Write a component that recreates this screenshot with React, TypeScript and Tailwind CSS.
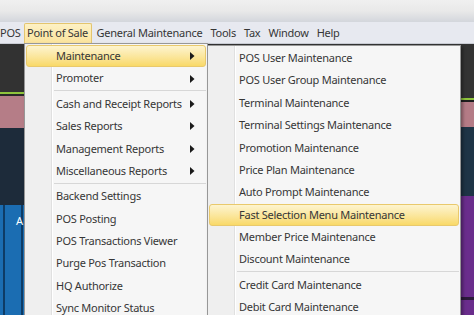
import type { ReactNode } from 'react';

type Item = { label: string; sub?: boolean; active?: boolean } | 'sep';

const mainItems: Item[] = [
  { label: 'Maintenance', sub: true, active: true },
  { label: 'Promoter', sub: true },
  'sep',
  { label: 'Cash and Receipt Reports', sub: true },
  { label: 'Sales Reports', sub: true },
  { label: 'Management Reports', sub: true },
  { label: 'Miscellaneous Reports', sub: true },
  'sep',
  { label: 'Backend Settings' },
  { label: 'POS Posting' },
  { label: 'POS Transactions Viewer' },
  { label: 'Purge Pos Transaction' },
  { label: 'HQ Authorize' },
  { label: 'Sync Monitor Status' },
];

const subItems: Item[] = [
  { label: 'POS User Maintenance' },
  { label: 'POS User Group Maintenance' },
  { label: 'Terminal Maintenance' },
  { label: 'Terminal Settings Maintenance' },
  { label: 'Promotion Maintenance' },
  { label: 'Price Plan Maintenance' },
  { label: 'Auto Prompt Maintenance' },
  { label: 'Fast Selection Menu Maintenance', active: true },
  { label: 'Member Price Maintenance' },
  { label: 'Discount Maintenance' },
  'sep',
  { label: 'Credit Card Maintenance' },
  { label: 'Debit Card Maintenance' },
];

const Arrow = () => (
  <svg width="5" height="8" viewBox="0 0 5 8" className="shrink-0">
    <path d="M0 0 L4.5 4 L0 8 Z" fill="#1a1a1a" />
  </svg>
);

const MenuList = ({ items, gutter }: { items: Item[]; gutter: number }) => (
  <div className="flex flex-col">
    {items.map((it, i) =>
      it === 'sep' ? (
        <div key={i} className="flex h-[3px] items-center" style={{ paddingLeft: gutter + 2 }}>
          <div className="h-[2px] w-full border-t border-[#d7d7d7] border-b-white" />
        </div>
      ) : (
        <div
          key={i}
          className={
            'flex h-[22.4px] items-center rounded-[3px] pr-[10px] ' +
            (it.active
              ? 'border border-[#e9c96c] bg-gradient-to-b from-[#fdf4cf] to-[#f9d967]'
              : 'border border-transparent')
          }
          style={{ paddingLeft: gutter + 3 }}
        >
          <span className="flex-1 whitespace-nowrap">{it.label}</span>
          {it.sub && <Arrow />}
        </div>
      )
    )}
  </div>
);

const Panel = ({ className, gutter, children }: { className: string; gutter: number; children: ReactNode }) => (
  <div className={'absolute overflow-hidden border border-[#979797] bg-[#f6f6f6] shadow-[2px_2px_3px_rgba(0,0,0,0.35)] ' + className}>
    <div className="absolute top-0 bottom-0 left-0 bg-[#efefef]" style={{ width: gutter }} />
    <div className="absolute top-0 bottom-0 w-[1px] bg-[#e0e0e0]" style={{ left: gutter }} />
    <div className="absolute top-0 bottom-0 w-[1px] bg-white" style={{ left: gutter + 1 }} />
    <div className="relative p-[1px]">{children}</div>
  </div>
);

export default function App() {
  return (
    <div
      className="relative flex h-[315px] w-[474px] flex-col overflow-hidden text-[11px] tracking-[-0.25px] text-[#363636]"
      style={{ fontFamily: '"Segoe UI", "Noto Sans", sans-serif' }}
    >
      {/* title bar */}
      <div className="h-[22px] bg-gradient-to-b from-[#f0f0f0] via-[#e9e9e9] to-[#d3d6dc]" />
      {/* menu bar */}
      <div className="flex h-[22px] items-center border-b border-[#c9ccd4] bg-[#e7e9f0] pt-[1px]">
        <span className="mr-[3px] ml-[0px]">POS</span>
        <span className="flex h-[21px] w-[68px] items-center justify-center rounded-t-[2px] border border-b-0 border-[#e3c56e] bg-gradient-to-b from-[#fdf1c4] to-[#fbe39a]">
          Point of Sale
        </span>
        <div className="ml-[5px] flex gap-[8px]">
          <span>General Maintenance</span>
          <span>Tools</span>
          <span>Tax</span>
          <span>Window</span>
          <span>Help</span>
        </div>
      </div>
      {/* application body behind menus */}
      <div className="flex flex-1">
        <div className="flex w-[240px] flex-col">
          <div className="h-[48px] bg-[#323232]" />
          <div className="h-[2px] bg-[#8fc43c]" />
          <div className="h-[2px] bg-[#2a2a2a]" />
          <div className="h-[32px] bg-[#b57d87]" />
          <div className="h-[77px] bg-[#1d2b3a]" />
          <div className="flex flex-1 bg-[#1b6db2]">
            <div className="ml-[3px] w-[2px] bg-[#0e3c66]" />
            <div className="ml-[16px] w-[2px] bg-[#0e3c66]" />
            <span className="mt-[8px] ml-[-7px] text-[11px] text-white">A</span>
          </div>
        </div>
        <div className="flex flex-1 flex-col">
          <div className="h-[54px] bg-[#333333]" />
          <div className="h-[2px] bg-[#8fc43c]" />
          <div className="h-[2px] bg-[#1e1e1e]" />
          <div className="h-[25px] bg-[#b47b86]" />
          <div className="h-[69px] bg-[#1e3446]" />
          <div className="h-[101px] bg-[#6a2d8c]" />
          <div className="h-[3px] bg-[#2b1a3a]" />
          <div className="flex-1 bg-[#6a2d8c]" />
        </div>
      </div>

      <Panel className="top-[43px] left-[24px] w-[184px]" gutter={26}>
        <MenuList items={mainItems} gutter={26} />
      </Panel>
      <Panel className="top-[45px] left-[207px] w-[254px]" gutter={26}>
        <MenuList items={subItems} gutter={26} />
      </Panel>
    </div>
  );
}
